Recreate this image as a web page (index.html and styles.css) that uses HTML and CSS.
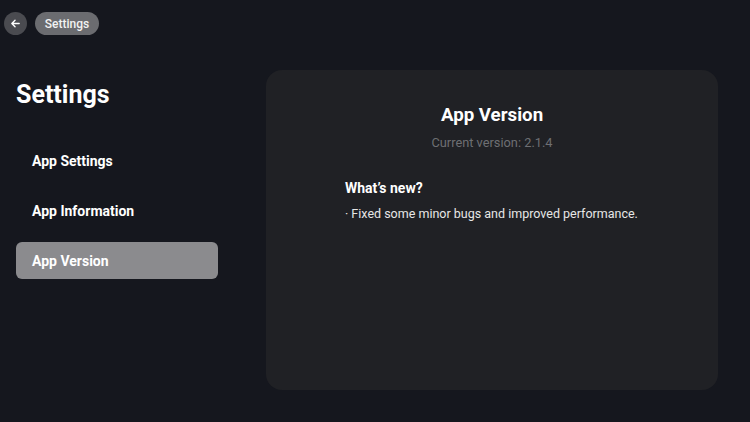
FILE: index.html
```html
<!DOCTYPE html>
<html>
<head>
<meta charset="utf-8">
<link rel="stylesheet" href="styles.css">
</head>
<body>
<div class="app">
  <header class="topbar">
    <button class="back" aria-label="Back">
      <svg width="11" height="11" viewBox="0 0 24 24"><path d="M20 12H5M11 5l-7 7 7 7" fill="none" stroke="#fff" stroke-width="3" stroke-linecap="round" stroke-linejoin="round"/></svg>
    </button>
    <span class="crumb">Settings</span>
  </header>
  <div class="main">
    <aside class="side">
      <h1 class="side-title">Settings</h1>
      <nav class="menu">
        <div class="item">App Settings</div>
        <div class="item">App Information</div>
        <div class="item active">App Version</div>
      </nav>
    </aside>
    <section class="panel">
      <h2 class="panel-title">App Version</h2>
      <div class="current">Current version: 2.1.4</div>
      <div class="news">
        <div class="news-title">What’s new?</div>
        <div class="news-item">· Fixed some minor bugs and improved performance.</div>
      </div>
    </section>
  </div>
</div>
</body>
</html>
```
FILE: styles.css
```css
* { box-sizing: border-box; }
html, body { margin: 0; padding: 0; }
body {
  width: 750px;
  height: 422px;
  background: #15171e;
  font-family: Roboto, "Liberation Sans", sans-serif;
  color: #fff;
  overflow: hidden;
}
.app { display: flex; flex-direction: column; height: 100%; }
.topbar {
  display: flex;
  align-items: center;
  gap: 8px;
  padding: 12px 0 0 4px;
  height: 35px;
}
.back {
  width: 23px; height: 23px;
  border-radius: 50%;
  background: #4a4b50;
  border: none; padding: 0;
  display: flex; align-items: center; justify-content: center;
}
.crumb {
  height: 23px;
  width: 64px;
  border-radius: 12px;
  background: #6b6c70;
  font-size: 12px;
  font-weight: 500;
  display: flex; align-items: center; justify-content: center;
  color: #f2f2f2;
}
.main {
  display: flex;
  padding: 35px 32px 0 16px;
  gap: 48px;
}
.side { width: 202px; }
.side-title {
  margin: 0;
  font-size: 25px;
  font-weight: 700;
  line-height: 50px;
}
.menu {
  display: flex; flex-direction: column;
  gap: 13px;
  margin-top: 22px;
}
.item {
  height: 37px;
  border-radius: 6px;
  padding: 0 16px;
  display: flex; align-items: center;
  font-size: 14px;
  font-weight: 700;
}
.item.active { background: #8b8b8e; }
.panel {
  width: 452px;
  height: 320px;
  background: #202125;
  border-radius: 16px;
  padding-top: 33px;
  display: flex; flex-direction: column;
}
.panel-title {
  margin: 0;
  text-align: center;
  font-size: 18.7px;
  font-weight: 700;
  line-height: 24px;
}
.current {
  text-align: center;
  font-size: 12.8px;
  color: #6e6f73;
  margin-top: 8px;
}
.news { padding: 29px 0 0 79px; }
.news-title { font-size: 14px; font-weight: 700; line-height: 18px; }
.news-item { font-size: 12.5px; color: #e6e6e6; margin-top: 9px; }
```
